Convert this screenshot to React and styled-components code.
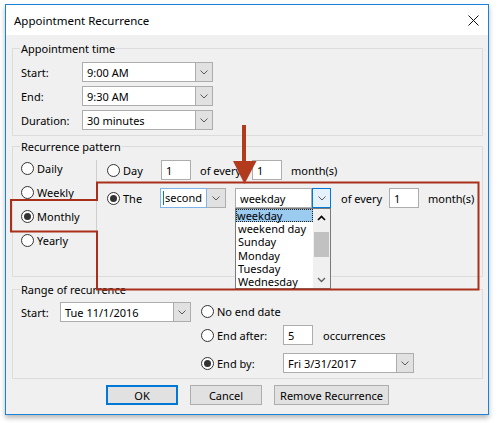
import React from "react";
import styled, { createGlobalStyle, css } from "styled-components";

const GlobalStyle = createGlobalStyle`
  html, body { margin: 0; padding: 0; background: #ffffff; }
  body {
    font-family: "Noto Sans", "Open Sans", sans-serif;
    font-size: 11px;
    color: #000;
  }
  * { box-sizing: border-box; }
`;

const Page = styled.div`
  position: relative;
  width: 497px;
  height: 423px;
  overflow: hidden;
  padding: 4px 0 0 5px;
`;

const Window = styled.div`
  width: 484px;
  height: 411px;
  border: 1px solid #1a82d9;
  background: #f0f0f0;
  box-shadow: 0 3px 5px rgba(0, 0, 0, 0.28);
  display: flex;
  flex-direction: column;
`;

const TitleBar = styled.div`
  flex: none;
  height: 30px;
  background: #ffffff;
  display: flex;
  align-items: center;
  padding: 0 9px 0 8px;
`;

const Title = styled.div`
  font-size: 11.5px;
`;

const CloseIcon = styled.svg`
  display: block;
  margin-left: auto;
`;

const Body = styled.div`
  flex: 1;
  display: flex;
  flex-direction: column;
  padding: 6px 5px 8px 6px;
`;

const Group = styled.fieldset`
  margin: ${(p) => p.$mt || 0}px 0 0 0;
  padding: ${(p) => p.$pad};
  border: 1px solid #dcdcdc;
  min-width: 0;
`;

const Legend = styled.legend`
  padding: 0 1px;
  margin-left: -1px;
  height: 15px;
  line-height: 15px;
`;

const TimeGrid = styled.div`
  display: grid;
  grid-template-columns: 61px auto;
  grid-auto-rows: 20px;
  row-gap: 4px;
  align-items: center;
  justify-items: start;
`;

const Label = styled.span`
  flex: none;
  width: ${(p) => (p.$w ? `${p.$w}px` : "auto")};
  white-space: nowrap;
`;

const Combo = styled.div`
  position: relative;
  flex: none;
  display: flex;
  height: 20px;
  margin-top: ${(p) => p.$mt || 0}px;
`;

const ComboField = styled.div`
  width: ${(p) => p.$w}px;
  height: 20px;
  background: #ffffff;
  border: 1px solid ${(p) => (p.$focus ? "#7eb4ea" : "#adadad")};
  display: flex;
  align-items: center;
  padding-left: ${(p) => p.$pl ?? 4}px;
  white-space: nowrap;
`;

const Caret = styled.span`
  border-left: 1px solid #0078d7;
  padding-left: 1px;
  line-height: 14px;
`;

const DropButton = styled.div`
  width: ${(p) => p.$w || 17}px;
  height: 20px;
  display: flex;
  align-items: center;
  justify-content: center;
  ${(p) =>
    p.$focus
      ? css`
          border: 1px solid #0078d7;
          background: #e5f1fb;
        `
      : css`
          border: 1px solid #adadad;
          border-left: none;
          background: #e1e1e1;
        `}
`;

const Chevron = () => (
  <svg width="8" height="5" viewBox="0 0 8 5">
    <polyline points="0.5,0.5 4,4 7.5,0.5" fill="none" stroke="#5a5a5a" strokeWidth="1" />
  </svg>
);

const TextBox = styled.div`
  flex: none;
  width: 30px;
  height: 20px;
  background: #ffffff;
  border: 1px solid #adadad;
  padding-left: 4px;
  display: flex;
  align-items: center;
`;

const Choice = styled.label`
  flex: none;
  display: flex;
  align-items: center;
  gap: 3px;
  width: ${(p) => (p.$w ? `${p.$w}px` : "auto")};
  height: ${(p) => p.$h || 16}px;
  white-space: nowrap;
`;

const RadioDot = styled.span`
  flex: none;
  width: 13px;
  height: 13px;
  border-radius: 50%;
  border: 1px solid #333333;
  background: #ffffff;
  display: flex;
  align-items: center;
  justify-content: center;
  &::after {
    content: "";
    display: ${(p) => (p.$on ? "block" : "none")};
    width: 7px;
    height: 7px;
    border-radius: 50%;
    background: #333333;
  }
`;

const Radio = ({ on, children, w, h }) => (
  <Choice $w={w} $h={h}>
    <RadioDot $on={on} />
    {children}
  </Choice>
);

const PatternBody = styled.div`
  display: flex;
  height: 112px;
`;

const KindColumn = styled.div`
  flex: none;
  width: 75px;
  display: flex;
  flex-direction: column;
  gap: 8px;
`;

const OptionsColumn = styled.div`
  flex: 1;
  border-left: 1px solid #cfcfcf;
  padding-left: 10px;
  display: flex;
  flex-direction: column;
  gap: 8px;
`;

const OptionRow = styled.div`
  display: flex;
  align-items: center;
  height: 20px;
`;

const Phrase = styled.span`
  flex: none;
  width: ${(p) => (p.$w ? `${p.$w}px` : "auto")};
  padding-left: ${(p) => p.$pl || 0}px;
  white-space: nowrap;
`;

const ListPopup = styled.div`
  position: absolute;
  top: 20px;
  left: 0;
  width: 96px;
  height: 81px;
  background: #ffffff;
  border: 1px solid #7a7a7a;
  display: flex;
  z-index: 2;
`;

const ListItems = styled.div`
  flex: 1;
  display: flex;
  flex-direction: column;
`;

const ListItem = styled.div`
  height: 13.3px;
  line-height: 13px;
  padding-left: 2px;
  white-space: nowrap;
  ${(p) =>
    p.$active &&
    css`
      background: #9ccbf0;
      outline: 1px dotted #202020;
      outline-offset: -1px;
      padding-left: 1px;
    `}
`;

const ScrollBar = styled.div`
  flex: none;
  width: 17px;
  background: #f0f0f0;
  display: flex;
  flex-direction: column;
`;

const ScrollArrow = styled.div`
  flex: none;
  height: 17px;
  display: flex;
  align-items: center;
  justify-content: center;
`;

const ScrollTrack = styled.div`
  flex: 1;
  padding: 6px 1px 0 1px;
`;

const ScrollThumb = styled.div`
  height: 25px;
  background: #c1c1c1;
`;

const RangeBody = styled.div`
  display: flex;
  align-items: flex-start;
`;

const StartField = styled.div`
  flex: none;
  display: flex;
  align-items: center;
  margin-top: 1px;
`;

const EndColumn = styled.div`
  margin-left: 10px;
  display: flex;
  flex-direction: column;
  gap: 4px;
`;

const EndRow = styled.div`
  display: flex;
  align-items: center;
  height: 20px;
  margin-top: ${(p) => p.$mt || 0}px;
`;

const ButtonRow = styled.div`
  display: flex;
  justify-content: center;
  gap: 12px;
  margin-top: 6px;
`;

const DialogButton = styled.button`
  width: ${(p) => p.$w}px;
  height: 20px;
  padding: 0;
  font: inherit;
  color: #000;
  background: #e1e1e1;
  border: ${(p) => (p.$default ? "2px solid #0078d7" : "1px solid #adadad")};
`;

const Annotation = styled.svg`
  position: absolute;
  left: 0;
  top: 0;
  pointer-events: none;
  z-index: 5;
`;

const weekdays = ["weekday", "weekend day", "Sunday", "Monday", "Tuesday", "Wednesday"];

export default function App() {
  return (
    <>
      <GlobalStyle />
      <Page>
        <Window>
          <TitleBar>
            <Title>Appointment Recurrence</Title>
            <CloseIcon width="11" height="11" viewBox="0 0 11 11">
              <path d="M0.5 0.5 L10.5 10.5 M10.5 0.5 L0.5 10.5" stroke="#111" strokeWidth="1" />
            </CloseIcon>
          </TitleBar>

          <Body>
            <Group $pad="6px 8px 5px 8px">
              <Legend>Appointment time</Legend>
              <TimeGrid>
                <Label>Start:</Label>
                <Combo>
                  <ComboField $w={114}>9:00 AM</ComboField>
                  <DropButton><Chevron /></DropButton>
                </Combo>
                <Label>End:</Label>
                <Combo>
                  <ComboField $w={114}>9:30 AM</ComboField>
                  <DropButton><Chevron /></DropButton>
                </Combo>
                <Label>Duration:</Label>
                <Combo>
                  <ComboField $w={114}>30 minutes</ComboField>
                  <DropButton><Chevron /></DropButton>
                </Combo>
              </TimeGrid>
            </Group>

            <Group $mt={3} $pad="6px 0 4px 8px">
              <Legend>Recurrence pattern</Legend>
              <PatternBody>
                <KindColumn>
                  <Radio>Daily</Radio>
                  <Radio>Weekly</Radio>
                  <Radio on>Monthly</Radio>
                  <Radio>Yearly</Radio>
                </KindColumn>
                <OptionsColumn>
                  <OptionRow>
                    <Radio w={54} h={20}>Day</Radio>
                    <TextBox>1</TextBox>
                    <Phrase $w={61} $pl={9}>of every</Phrase>
                    <TextBox>1</TextBox>
                    <Phrase $pl={9}>month(s)</Phrase>
                  </OptionRow>
                  <OptionRow>
                    <Radio on w={53} h={20}>The</Radio>
                    <Combo>
                      <ComboField $w={47} $focus $pl={2}>
                        <Caret>second</Caret>
                      </ComboField>
                      <DropButton $w={19}><Chevron /></DropButton>
                    </Combo>
                    <Phrase $w={9} />
                    <Combo>
                      <ComboField $w={77}>weekday</ComboField>
                      <DropButton $w={19} $focus><Chevron /></DropButton>
                      <ListPopup>
                        <ListItems>
                          {weekdays.map((d, i) => (
                            <ListItem key={d} $active={i === 0}>{d}</ListItem>
                          ))}
                        </ListItems>
                        <ScrollBar>
                          <ScrollArrow>
                            <svg width="9" height="6" viewBox="0 0 9 6">
                              <polyline points="1,5 4.5,1.5 8,5" fill="none" stroke="#000" strokeWidth="1.6" />
                            </svg>
                          </ScrollArrow>
                          <ScrollTrack>
                            <ScrollThumb />
                          </ScrollTrack>
                          <ScrollArrow>
                            <svg width="9" height="6" viewBox="0 0 9 6">
                              <polyline points="1,1 4.5,4.5 8,1" fill="none" stroke="#606060" strokeWidth="1.4" />
                            </svg>
                          </ScrollArrow>
                        </ScrollBar>
                      </ListPopup>
                    </Combo>
                    <Phrase $w={58} $pl={10}>of every</Phrase>
                    <TextBox>1</TextBox>
                    <Phrase $pl={9}>month(s)</Phrase>
                  </OptionRow>
                </OptionsColumn>
              </PatternBody>
            </Group>

            <Group $mt={5} $pad="4px 8px 5px 8px">
              <Legend>Range of recurrence</Legend>
              <RangeBody>
                <StartField>
                  <Label $w={39}>Start:</Label>
                  <Combo>
                    <ComboField $w={114}>Tue 11/1/2016</ComboField>
                    <DropButton><Chevron /></DropButton>
                  </Combo>
                </StartField>
                <EndColumn>
                  <EndRow>
                    <Radio h={20}>No end date</Radio>
                  </EndRow>
                  <EndRow>
                    <Radio w={82} h={20}>End after:</Radio>
                    <TextBox>5</TextBox>
                    <Phrase $pl={10}>occurrences</Phrase>
                  </EndRow>
                  <EndRow $mt={4}>
                    <Radio on w={82} h={20}>End by:</Radio>
                    <Combo>
                      <ComboField $w={114}>Fri 3/31/2017</ComboField>
                      <DropButton><Chevron /></DropButton>
                    </Combo>
                  </EndRow>
                </EndColumn>
              </RangeBody>
            </Group>

            <ButtonRow>
              <DialogButton $w={72} $default>OK</DialogButton>
              <DialogButton $w={72}>Cancel</DialogButton>
              <DialogButton $w={115}>Remove Recurrence</DialogButton>
            </ButtonRow>
          </Body>
        </Window>

        <Annotation width="497" height="423" viewBox="0 0 497 423">
          <path
            d="M97 200 V182.5 H478.5 V289.5 H97 V231.5 H11 V200 Z"
            fill="none"
            stroke="#a8301a"
            strokeWidth="2"
          />
          <rect x="242" y="125" width="4" height="40" fill="#b23b1d" />
          <polygon points="233,161 256.5,161 244.5,184" fill="#b23b1d" />
        </Annotation>
      </Page>
    </>
  );
}
